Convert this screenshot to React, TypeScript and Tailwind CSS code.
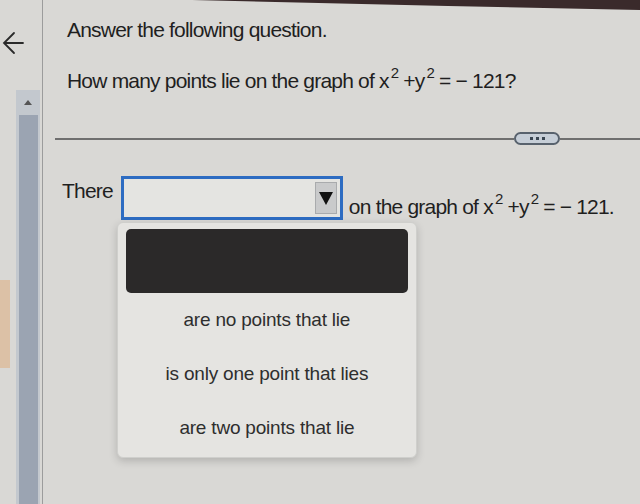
import React from 'react';

const Sq: React.FC<{ base: string }> = ({ base }) => (
  <span className="whitespace-nowrap">
    {base}
    <span className="relative -top-[10px] ml-[2px] text-[15px]">2</span>
  </span>
);

const Equation: React.FC<{ end: string }> = ({ end }) => (
  <span className="whitespace-nowrap">
    <Sq base="x" /> +<Sq base="y" /> = − 121{end}
  </span>
);

const options = ['are no points that lie', 'is only one point that lies', 'are two points that lie'];

export default function App() {
  return (
    <div
      className="relative w-[640px] h-[504px] overflow-hidden bg-[#d9d8d5] text-[#1f1f1f]"
      style={{ fontFamily: '"Liberation Sans", Arial, sans-serif' }}
    >
      {/* monitor bezel at the top edge */}
      <div className="absolute top-0 left-0 w-full h-[10px] bg-[#3a2a2b] [clip-path:polygon(30%_0,100%_0,100%_100%,70%_60%,30%_0)]" />

      <div className="flex h-full">
        <aside className="w-[43px] shrink-0 border-r border-[#9c9c9c] flex flex-col relative">
          <div className="pt-[31px] pl-[2px] h-[90px]">
            <svg width="22" height="24" viewBox="0 0 22 24" fill="none" stroke="#2a2a2a" strokeWidth="1.8" strokeLinecap="round">
              <path d="M21 12H2M12 2L2 12l10 10" />
            </svg>
          </div>
          <div className="absolute left-0 top-[280px] w-[10px] h-[88px] bg-[#dcc1a6]" />
          <div className="ml-[16px] w-[24px] flex-1 bg-[#c3c8ce] flex flex-col items-center">
            <div className="h-[25px] flex items-center justify-center">
              <div className="w-0 h-0 border-l-[4px] border-r-[4px] border-b-[5px] border-l-transparent border-r-transparent border-b-[#555]" />
            </div>
            <div className="w-[19px] flex-1 bg-[#9ba4b2]" />
          </div>
        </aside>

        <main className="flex-1 pl-[24px] pt-[17px] tracking-[-0.8px]">
          <h1 className="text-[21px] leading-[26px]">Answer the following question.</h1>
          <p className="mt-[25px] text-[21px] leading-[26px]">
            How many points lie on the graph of <Equation end="?" />
          </p>

          <div className="mt-[36px] -ml-[12px] flex items-center">
            <div className="flex-1 h-[2px] bg-[#6f6f6f]" />
            <div className="w-[46px] h-[13px] rounded-full border-2 border-[#58626d] bg-[#c6ced7] flex items-center justify-center gap-[3px]">
              <span className="w-[3px] h-[3px] bg-[#3a4652]" />
              <span className="w-[3px] h-[3px] bg-[#3a4652]" />
              <span className="w-[3px] h-[3px] bg-[#3a4652]" />
            </div>
            <div className="w-[80px] h-[2px] bg-[#6f6f6f]" />
          </div>

          <div className="mt-[31px] -ml-[5px] flex items-start text-[21px] leading-[26px]">
            <span className="pt-[2px]">There</span>
            <div className="relative ml-[8px]">
              <div className="w-[222px] h-[44px] border-[3px] border-[#2d6cc2] bg-[#e4e4e1] flex justify-end items-stretch p-[3px]">
                <div className="w-[22px] bg-[#c9cacb] border border-[#a9abad] flex items-center justify-center">
                  <div className="w-0 h-0 border-l-[7px] border-r-[7px] border-t-[13px] border-l-transparent border-r-transparent border-t-[#111]" />
                </div>
              </div>

              <div className="absolute left-[-4px] top-[46px] w-[300px] rounded-[6px] border border-[#cfcfcc] bg-[#e5e4e1] shadow-[0_3px_8px_rgba(0,0,0,0.18)] pt-[6px] pb-[2px] px-[8px] tracking-[-0.2px]">
                <div className="h-[64px] rounded-[5px] bg-[#2b2929]" />
                {options.map((o) => (
                  <div key={o} className="h-[54px] flex items-center justify-center text-[19px] text-[#2e2e2e]">
                    {o}
                  </div>
                ))}
              </div>
            </div>
            <span className="ml-[6px] pt-[18px]">
              on the graph of <Equation end="." />
            </span>
          </div>
        </main>
      </div>
    </div>
  );
}
